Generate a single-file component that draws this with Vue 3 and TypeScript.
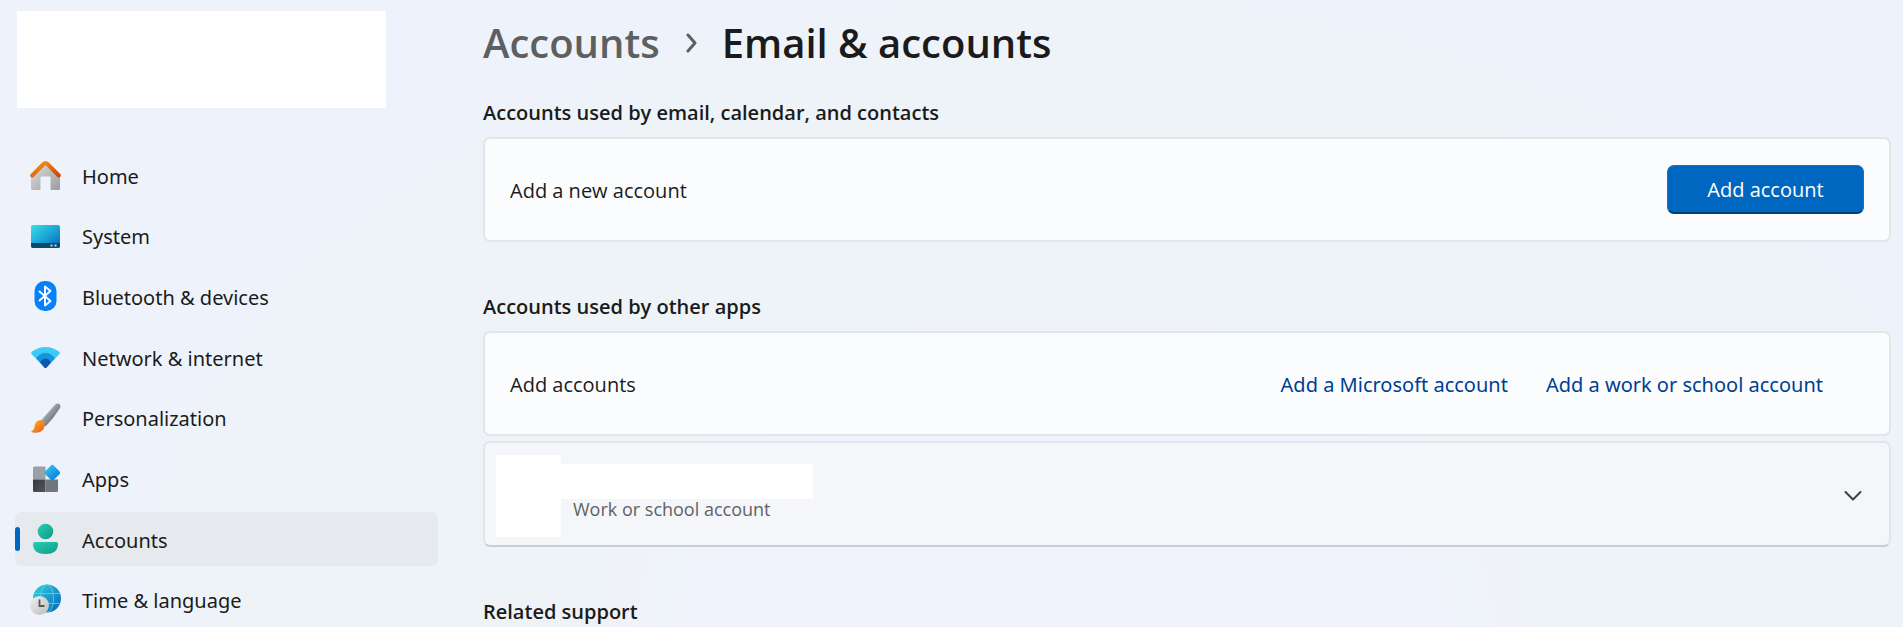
<script setup lang="ts">
import { ref } from 'vue'

interface NavItem {
  id: string
  label: string
}

const items: NavItem[] = [
  { id: 'home', label: 'Home' },
  { id: 'system', label: 'System' },
  { id: 'bluetooth', label: 'Bluetooth & devices' },
  { id: 'network', label: 'Network & internet' },
  { id: 'personalization', label: 'Personalization' },
  { id: 'apps', label: 'Apps' },
  { id: 'accounts', label: 'Accounts' },
  { id: 'time', label: 'Time & language' },
]

const current = ref('accounts')
const expanded = ref(false)
</script>

<template>
  <div class="window">
    <aside class="sidebar">
      <div class="profile"></div>
      <nav class="nav" aria-label="Settings">
        <a
          v-for="item in items"
          :key="item.id"
          class="nav-item"
          :class="{ selected: item.id === current }"
          :href="'#' + item.id"
          :aria-current="item.id === current ? 'page' : undefined"
          @click.prevent="current = item.id"
        >
          <svg class="nav-icon" viewBox="0 0 32 32" aria-hidden="true">
            <template v-if="item.id === 'home'">
              <defs>
                <linearGradient id="wall" x1="0" y1="0" x2="1" y2="1">
                  <stop offset="0" stop-color="#dedede" />
                  <stop offset="1" stop-color="#9d9d9d" />
                </linearGradient>
                <linearGradient id="roof" x1="0" y1="0" x2="1" y2="1">
                  <stop offset="0" stop-color="#f59a16" />
                  <stop offset="1" stop-color="#d34409" />
                </linearGradient>
              </defs>
              <path d="M15.5 4 30 17v12.5q0 1.5-1.5 1.5h-7q-1 0-1-1V18.500q0-1-1-1h-8q-1 0-1 1V30q0 1-1 1h-7Q1 31 1 29.500V17z" fill="url(#wall)" />
              <path d="M2.200 16.500 13.500 5q2-2 4 0l11.300 11.500" fill="none" stroke="url(#roof)" stroke-width="4" stroke-linecap="round" stroke-linejoin="round" />
            </template>
            <template v-else-if="item.id === 'system'">
              <defs>
                <linearGradient id="screen" x1="0" y1="0" x2="1" y2="1">
                  <stop offset="0" stop-color="#35dfe5" />
                  <stop offset=".55" stop-color="#1c9fd6" />
                  <stop offset="1" stop-color="#0760b8" />
                </linearGradient>
              </defs>
              <rect x="1" y="5" width="29" height="23" rx="2" fill="url(#screen)" />
              <path d="M1 23h29v3q0 2-2 2H3q-2 0-2-2z" fill="#0c4a6c" />
              <path d="M20.500 24.500h2v2h-2zM24.500 24.500h2v2h-2z" fill="#b9dfef" />
            </template>
            <template v-else-if="item.id === 'bluetooth'">
              <rect x="4.500" y="1" width="22" height="30" rx="10" fill="#0582fb" />
              <path d="m9.500 11.500 11 9.500-5.500 4.500V6.500l5.500 4.500-11 9.500" fill="none" stroke="#fff" stroke-width="1.900" stroke-linejoin="round" stroke-linecap="round" />
            </template>
            <template v-else-if="item.id === 'network'">
              <path d="M1.500 13q-1-1.200.3-2.200Q8 6 15.500 6T29.200 10.800q1.300 1 .3 2.200L16.500 26.500q-1 1-2 0z" fill="#3dcbf4" />
              <path d="M6 17.300q4-5.300 9.500-5.300t9.500 5.300l-8.500 9.200q-1 1-2 0z" fill="#1794e0" />
              <path d="M10.200 21.500q2-4 5.300-4t5.300 4l-4.300 5q-1 1-2 0z" fill="#0c57a6" />
            </template>
            <template v-else-if="item.id === 'personalization'">
              <defs>
                <linearGradient id="handle" x1="0" y1="0" x2="1" y2="1">
                  <stop offset=".25" stop-color="#b5bcc2" />
                  <stop offset=".75" stop-color="#62696f" />
                </linearGradient>
                <linearGradient id="bristle" x1="0" y1="0" x2="1" y2="1">
                  <stop offset="0" stop-color="#fdbb28" />
                  <stop offset="1" stop-color="#ec5518" />
                </linearGradient>
              </defs>
              <path d="M10.500 19 25 2.800q2-2 4-1t1.200 4Q24 16 15.500 24.500z" fill="url(#handle)" />
              <path d="M1 29.500q3-1 3.500-5Q5.500 18 10.500 18q4.800.8 4.300 5.500Q13.500 30.500 6 30.800q-3.500.2-5-1.300z" fill="url(#bristle)" />
            </template>
            <template v-else-if="item.id === 'apps'">
              <defs>
                <linearGradient id="tile" x1="0" y1="0" x2="1" y2="1">
                  <stop offset="0" stop-color="#35c9f5" />
                  <stop offset="1" stop-color="#0a73d6" />
                </linearGradient>
                <linearGradient id="darktile" x1="0" y1="0" x2="1" y2="1">
                  <stop offset="0" stop-color="#35383b" />
                  <stop offset="1" stop-color="#53575c" />
                </linearGradient>
              </defs>
              <path d="M3 5q0-1.500 1.500-1.500h11v13H3z" fill="#98a0a8" />
              <path d="M3 16.500h12.500V29h-11Q3 29 3 27.500z" fill="url(#darktile)" />
              <path d="M15.500 16.500H28v11q0 1.500-1.500 1.500h-11z" fill="#70767e" />
              <path d="M21 2.400q1.300-1.300 2.600 0l6 6.100q1.200 1.200 0 2.400l-6 6.200q-1.300 1.300-2.600 0l-6-6.200q-1.200-1.200 0-2.400z" fill="url(#tile)" />
            </template>
            <template v-else-if="item.id === 'accounts'">
              <defs>
                <linearGradient id="person" x1="0" y1="0" x2="1" y2="1">
                  <stop offset="0" stop-color="#2acdb5" />
                  <stop offset="1" stop-color="#109a84" />
                </linearGradient>
              </defs>
              <circle cx="15.500" cy="8.500" r="7.800" fill="url(#person)" />
              <path d="M5 19h21q2 0 2 2 0 10-12.500 10T3 21q0-2 2-2z" fill="url(#person)" />
            </template>
            <template v-else>
              <defs>
                <linearGradient id="globe" x1="0" y1="0" x2="1" y2="1">
                  <stop offset="0" stop-color="#34d5dc" />
                  <stop offset="1" stop-color="#0862bb" />
                </linearGradient>
                <linearGradient id="dial" x1="0" y1="0" x2="1" y2="1">
                  <stop offset="0" stop-color="#f0f0f0" />
                  <stop offset="1" stop-color="#bcbcbc" />
                </linearGradient>
              </defs>
              <circle cx="17" cy="14.500" r="14" fill="url(#globe)" />
              <g fill="none" stroke="#62dced" stroke-width="1" opacity=".75">
                <ellipse cx="17" cy="14.500" rx="6.500" ry="14" />
                <path d="M4.500 9.500h25M4.500 19.500h25" />
              </g>
              <circle cx="9.500" cy="21.500" r="9.500" fill="url(#dial)" />
              <path d="M9.500 15.500v6.500h5" fill="none" stroke="#55585b" stroke-width="1.800" />
            </template>
          </svg>
          <span class="nav-label">{{ item.label }}</span>
        </a>
      </nav>
    </aside>

    <main class="content">
      <h1 class="breadcrumb">
        <a class="parent" href="#accounts">Accounts</a>
        <svg class="separator" viewBox="0 0 12 20" aria-hidden="true">
          <path d="m2 2 7 8-7 8" />
        </svg>
        <span>Email &amp; accounts</span>
      </h1>

      <section class="group">
        <h2>Accounts used by email, calendar, and contacts</h2>
        <div class="card">
          <span class="card-label">Add a new account</span>
          <button class="primary" type="button">Add account</button>
        </div>
      </section>

      <section class="group">
        <h2>Accounts used by other apps</h2>
        <div class="card">
          <span class="card-label">Add accounts</span>
          <div class="links">
            <a href="#microsoft">Add a Microsoft account</a>
            <a href="#work">Add a work or school account</a>
          </div>
        </div>
        <button
          class="account"
          type="button"
          :aria-expanded="expanded"
          @click="expanded = !expanded"
        >
          <span class="avatar"></span>
          <span class="details">
            <span class="account-name"></span>
            <span class="account-kind">Work or school account</span>
          </span>
          <svg class="chevron" viewBox="0 0 18 12" aria-hidden="true">
            <path d="m1.500 2 7.500 7.500L16.500 2" />
          </svg>
        </button>
      </section>

      <section class="group">
        <h2>Related support</h2>
      </section>
    </main>
  </div>
</template>

<style>
body {
  margin: 0;
}
</style>

<style scoped>
.window {
  box-sizing: border-box;
  min-height: 100vh;
  display: grid;
  grid-template-columns: 438px minmax(0, 1fr);
  column-gap: 45px;
  padding-right: 12px;
  background: radial-gradient(
    ellipse 900px 620px at 56% 100%,
    #f0f3fb 0 42%,
    #eef3f7 58% 88%,
    #eef3fb 104%
  );
  color: #1b1b1b;
  font-family: "Open Sans", "Noto Sans", sans-serif;
  font-size: 20px;
  line-height: 28px;
}

.sidebar {
  display: flex;
  flex-direction: column;
  padding-top: 11px;
}

.profile {
  height: 97px;
  margin: 0 52px 40px 17px;
  background: #fff;
}

.nav {
  display: flex;
  flex-direction: column;
  justify-content: space-between;
  min-height: 479px;
  padding-left: 15px;
  font-family: "Noto Sans", "Open Sans", sans-serif;
}

.nav-item {
  position: relative;
  display: flex;
  align-items: center;
  gap: 20px;
  height: 54px;
  padding-left: 15px;
  border-radius: 6px;
  color: inherit;
  text-decoration: none;
}

.nav-label {
  padding-top: 3px;
}

.nav-item.selected {
  background: #e6e9ed;
}

.nav-item.selected::before {
  content: "";
  position: absolute;
  left: 0;
  top: 15px;
  width: 5px;
  height: 24px;
  border-radius: 3px;
  background: #0067c0;
}

.nav-icon {
  width: 32px;
  height: 32px;
}

.content {
  padding-top: 17px;
}

.breadcrumb {
  display: flex;
  align-items: center;
  margin: 0 0 30px;
  font-size: 40px;
  font-weight: 600;
  line-height: 52px;
}

.parent {
  color: #5d5f61;
  text-decoration: none;
}

.separator {
  width: 12px;
  height: 20px;
  margin: 0 24px 0 26px;
}

.separator path,
.chevron path {
  fill: none;
  stroke: #5d5f61;
  stroke-width: 2;
  stroke-linecap: round;
  stroke-linejoin: round;
}

.separator path {
  stroke-width: 3;
}

.group {
  margin-bottom: 51px;
}

.group:last-child {
  margin-bottom: 0;
}

h2 {
  margin: 0 0 10px;
  font-size: 20px;
  font-weight: 600;
  line-height: 28px;
}

.card,
.account {
  box-sizing: border-box;
  display: flex;
  width: 100%;
  border: 2px solid #e2e6eb;
  border-radius: 7px;
}

.card {
  align-items: center;
  justify-content: space-between;
  min-height: 105px;
  padding: 0 25px;
  background: #fbfcfe;
}

.card-label,
.links {
  padding-top: 3px;
}

.primary {
  min-width: 197px;
  height: 49px;
  padding: 2px 38px 0;
  border: 1px solid #1473c5;
  border-bottom: 2px solid #003e73;
  border-radius: 7px;
  background: #0067c0;
  color: #fff;
  font: inherit;
}

.links {
  display: flex;
  gap: 38px;
  padding-right: 41px;
  font-family: "Noto Sans", "Open Sans", sans-serif;
}

.links a {
  color: #003e92;
  text-decoration: none;
}

.account {
  align-items: flex-start;
  min-height: 106px;
  margin-top: 5px;
  padding: 12px 27px 8px 11px;
  border-bottom-color: #cacdd2;
  background: rgba(248, 249, 250, 0.6);
  color: inherit;
  font: inherit;
  text-align: left;
}

.avatar {
  width: 65px;
  height: 82px;
  background: #fff;
}

.details {
  display: flex;
  flex: 1;
  flex-direction: column;
  padding-top: 9px;
}

.account-name {
  width: 252px;
  height: 35px;
  background: #fff;
}

.account-kind {
  padding-left: 12px;
  color: #606265;
  font-size: 18px;
  line-height: 20px;
}

.chevron {
  align-self: center;
  width: 18px;
  height: 12px;
}

.chevron path {
  stroke: #3c3e40;
}
</style>
